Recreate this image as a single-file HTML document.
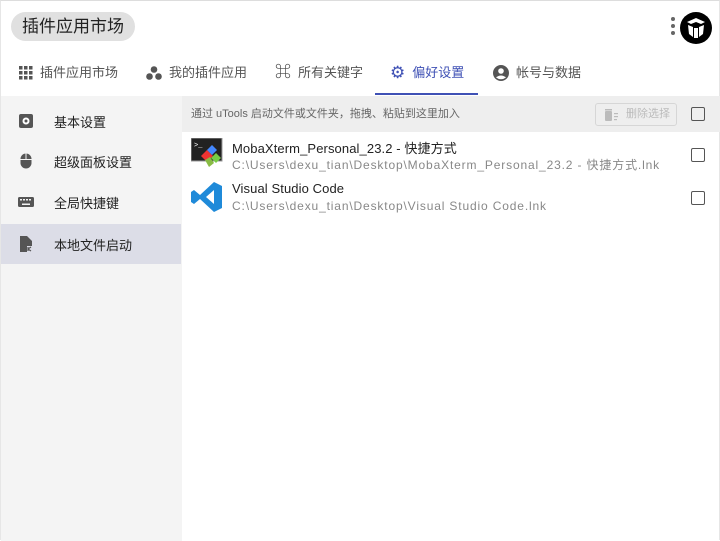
<!DOCTYPE html>
<html><head><meta charset="utf-8"><style>
*{margin:0;padding:0;box-sizing:border-box}
body{width:720px;height:540px;background:#fff;font-family:"Liberation Sans","Noto Sans CJK SC",sans-serif;position:relative;overflow:hidden;border-top:1px solid #ddd;border-left:1px solid #e6e6e6;border-right:1px solid #e6e6e6}
.abs{position:absolute}
.title{left:10px;top:11px;height:29px;padding:0 11px;border-radius:15px;background:#e0e0e0;font-size:17px;line-height:29px;color:#222}
.tab{top:61px;height:22px;font-size:13px;color:#555;line-height:22px;display:flex;align-items:center;gap:7px}
.side{left:0;top:95px;width:181px;height:445px;background:#f4f4f4}
.item{position:absolute;left:0;width:180px;height:40px;display:flex;align-items:center;font-size:13px;color:#222}
.item .ic{position:absolute;left:17px;top:12px;width:16px;height:16px}
.item span{position:absolute;left:53px}
.bar{left:181px;top:95px;width:539px;height:36px;background:#eee;font-size:11px;color:#666;line-height:36px;padding-left:9px}
.cb{width:14px;height:14px;border:1.6px solid #555;border-radius:2px}
.row .t{font-size:13px;color:#222;letter-spacing:0.1px}
.row .s{font-size:12px;color:#888;letter-spacing:0.85px}
</style></head><body>
<div class="abs title">插件应用市场</div>
<div class="abs" style="left:670px;top:16px;width:4px;height:22px">
<div style="width:4px;height:4px;border-radius:2px;background:#666;margin-bottom:3px"></div><div style="width:4px;height:4px;border-radius:2px;background:#666;margin-bottom:3px"></div><div style="width:4px;height:4px;border-radius:2px;background:#666"></div></div>
<svg class="abs" style="left:678px;top:10px" width="34" height="34" viewBox="0 0 34 34"><circle cx="17" cy="17" r="16" fill="#000"/><path d="M8 11 L17 7 L26 11 L22 13 L17 11 L12 13Z M9 14 L14 16 L14 26 L10 23Z M25 14 L20 16 L20 26 L24 23Z M15 17 L19 17 L19 27 L15 27Z" fill="#fff"/></svg>

<div class="abs tab" style="left:18px"><svg width="14" height="14" viewBox="0 0 14 14" fill="#555"><rect x="0" y="0" width="3.5" height="3.5"/><rect x="5" y="0" width="3.5" height="3.5"/><rect x="10" y="0" width="3.5" height="3.5"/><rect x="0" y="5" width="3.5" height="3.5"/><rect x="5" y="5" width="3.5" height="3.5"/><rect x="10" y="5" width="3.5" height="3.5"/><rect x="0" y="10" width="3.5" height="3.5"/><rect x="5" y="10" width="3.5" height="3.5"/><rect x="10" y="10" width="3.5" height="3.5"/></svg>插件应用市场</div>
<div class="abs tab" style="left:145px"><svg width="16" height="14" viewBox="0 0 16 14" fill="#555"><circle cx="8" cy="3.5" r="3.3"/><circle cx="3.5" cy="10.5" r="3.3"/><circle cx="12.5" cy="10.5" r="3.3"/></svg>我的插件应用</div>
<div class="abs tab" style="left:274px"><span style="font-size:16px;font-weight:bold;color:#444">⌘</span>所有关键字</div>
<div class="abs tab" style="left:389px;color:#3f51b5"><span style="font-size:17px">⚙</span>偏好设置</div>
<div class="abs tab" style="left:492px"><svg width="16" height="16" viewBox="0 0 16 16"><circle cx="8" cy="8" r="8" fill="#555"/><circle cx="8" cy="6" r="2.8" fill="#fff"/><path d="M3 12.5 Q8 8.5 13 12.5 Q8 16 3 12.5Z" fill="#fff"/></svg>帐号与数据</div>
<div class="abs" style="left:374px;top:92px;width:103px;height:2px;background:#3f51b5"></div>

<div class="abs side">
<div class="item" style="top:5px"><svg class="ic" viewBox="0 0 16 16"><rect x="1" y="1" width="14" height="14" rx="2" fill="#555"/><circle cx="8" cy="8" r="3.5" fill="#fff"/><circle cx="8" cy="8" r="1.5" fill="#555"/></svg><span>基本设置</span></div>
<div class="item" style="top:45px"><svg class="ic" viewBox="0 0 16 16"><rect x="2.5" y="0.5" width="11" height="15" rx="5.5" fill="#555"/><rect x="2" y="6" width="12" height="1" fill="#f4f4f4"/><rect x="7.5" y="0" width="1" height="6" fill="#f4f4f4"/></svg><span>超级面板设置</span></div>
<div class="item" style="top:86px"><svg class="ic" viewBox="0 0 16 16"><rect x="0" y="3" width="16" height="10" rx="1.5" fill="#555"/><g fill="#f4f4f4"><rect x="2" y="5" width="2" height="1.5"/><rect x="5" y="5" width="2" height="1.5"/><rect x="8" y="5" width="2" height="1.5"/><rect x="11" y="5" width="2" height="1.5"/><rect x="4" y="9.5" width="8" height="1.5"/></g></svg><span>全局快捷键</span></div>
<div class="item" style="top:128px;background:#dcdde7"><svg class="ic" viewBox="0 0 16 16"><path d="M2 0 H9 L14 5 V16 H2Z" fill="#555"/><rect x="9" y="10" width="6" height="6" fill="#dcdde7"/><path d="M10 11 V15 M10 13 L13 11 M10 13 L13 15" stroke="#555" stroke-width="1.2" fill="none"/></svg><span>本地文件启动</span></div>
</div>

<div class="abs bar">通过 uTools 启动文件或文件夹，拖拽、粘贴到这里加入</div>
<div class="abs" style="left:594px;top:102px;width:82px;height:23px;border:1px solid #d6d6d6;border-radius:3px;font-size:11px;color:#bbb;line-height:21px;padding-left:30px">删除选择
<svg class="abs" style="left:9px;top:5px" width="14" height="12" viewBox="0 0 14 12" fill="#bbb"><rect x="0" y="2" width="7" height="10" rx="1"/><rect x="0" y="0" width="7" height="1.5"/><rect x="9" y="4" width="4" height="1.2"/><rect x="9" y="7" width="4" height="1.2"/><rect x="9" y="10" width="3" height="1.2"/></svg></div>
<div class="abs cb" style="left:690px;top:106px"></div>

<div class="abs row" style="left:190px;top:137px">
<svg class="abs" style="left:0;top:0" width="32" height="30" viewBox="0 0 32 30"><rect x="0" y="0" width="31" height="23" fill="#222" stroke="#999"/><text x="3" y="9" fill="#fff" font-size="7" font-family="Liberation Mono">&gt;_</text><path d="M10 18 l6-6 6 6 -6 6z" fill="#e33"/><path d="M16 12 l5-5 5 5 -5 5z" fill="#48f"/><path d="M20 20 l5-5 5 5 -5 5z" fill="#7c4"/><path d="M14 22 l5 -3 4 6 -5 4z" fill="#8b4"/></svg>
<div class="abs t" style="left:41px;top:0;white-space:nowrap">MobaXterm_Personal_23.2 - 快捷方式</div>
<div class="abs s" style="left:41px;top:18px;white-space:nowrap">C:\Users\dexu_tian\Desktop\MobaXterm_Personal_23.2 - 快捷方式.lnk</div>
</div>
<div class="abs row" style="left:190px;top:180px">
<svg class="abs" style="left:0;top:0" width="32" height="32" viewBox="0 0 32 32"><path d="M23 1 L31 5 V27 L23 31 L9 18 L3 23 L0 21 V11 L3 9 L9 14Z M23 9 L15 16 L23 23Z" fill="#1f8ad9" fill-rule="evenodd"/></svg>
<div class="abs t" style="left:41px;top:0;white-space:nowrap">Visual Studio Code</div>
<div class="abs s" style="left:41px;top:18px;white-space:nowrap">C:\Users\dexu_tian\Desktop\Visual Studio Code.lnk</div>
</div>
<div class="abs cb" style="left:690px;top:147px"></div>
<div class="abs cb" style="left:690px;top:190px"></div>
</body></html>
